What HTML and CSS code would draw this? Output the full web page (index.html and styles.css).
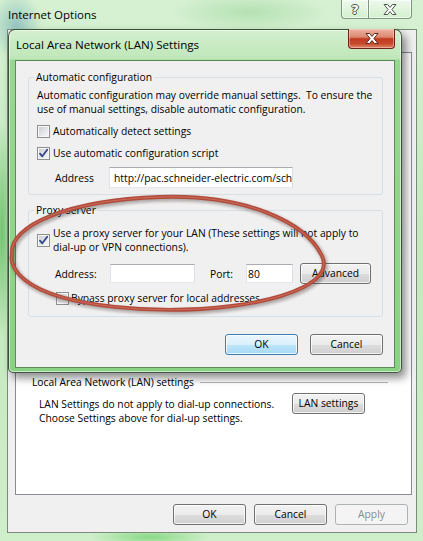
FILE: index.html
```html
<!DOCTYPE html>
<html lang="en">
<head>
<meta charset="utf-8">
<title>Internet Options</title>
<link rel="stylesheet" href="styles.css">
</head>
<body>
<div class="win">
  <div class="win-title">
    <span class="win-title-text">Internet Options</span>
    <div class="caption">
      <span class="cap-btn cap-help">?</span>
      <span class="cap-btn cap-close">
        <svg width="14" height="11" viewBox="0 0 14 11"><path d="M1 0.5H4.6L7 3.4L9.4 0.5H13L8.9 5.5L13 10.5H9.4L7 7.6L4.6 10.5H1L5.1 5.5Z" fill="#fff" stroke="#4a564a" stroke-width="1" stroke-linejoin="round"/></svg>
      </span>
    </div>
  </div>
  <div class="win-client">
    <div class="tabpanel">
      <div class="lan-head">
        <span class="lan-title">Local Area Network (LAN) settings</span>
        <span class="rule"></span>
      </div>
      <div class="lan-body">
        <p class="lan-text">LAN Settings do not apply to dial-up connections.<br>Choose Settings above for dial-up settings.</p>
        <button class="btn btn-lan">LAN settings</button>
      </div>
    </div>
    <div class="win-buttons">
      <button class="btn">OK</button>
      <button class="btn">Cancel</button>
      <button class="btn btn-disabled">Apply</button>
    </div>
  </div>
</div>

<div class="dialog">
  <div class="dlg-title">
    <span class="dlg-title-text">Local Area Network (LAN) Settings</span>
    <span class="dlg-close">
      <svg width="14" height="11" viewBox="0 0 14 11"><path d="M1 0.5H4.6L7 3.4L9.4 0.5H13L8.9 5.5L13 10.5H9.4L7 7.6L4.6 10.5H1L5.1 5.5Z" fill="#fff" stroke="#5a2a22" stroke-width="1" stroke-linejoin="round"/></svg>
    </span>
  </div>
  <div class="dlg-client">
    <fieldset class="group g-auto">
      <legend>Automatic configuration</legend>
      <p class="desc">Automatic configuration may override manual settings.&nbsp; To ensure the<br>use of manual settings, disable automatic configuration.</p>
      <label class="check"><span class="cb"></span><span>Automatically detect settings</span></label>
      <label class="check"><span class="cb"><svg width="11" height="11" viewBox="0 0 11 11"><path d="M2 5.6L4.3 8.3L9.2 1.8" fill="none" stroke="#34468a" stroke-width="1.8" stroke-linecap="round" stroke-linejoin="round"/></svg></span><span>Use automatic configuration script</span></label>
      <div class="addr-row">
        <span class="addr-label">Address</span>
        <input class="field field-auto" type="text" value="http://pac.schneider-electric.com/sch" readonly>
      </div>
    </fieldset>

    <fieldset class="group g-proxy">
      <legend>Proxy server</legend>
      <label class="check proxy-check"><span class="cb"><svg width="11" height="11" viewBox="0 0 11 11"><path d="M2 5.6L4.3 8.3L9.2 1.8" fill="none" stroke="#34468a" stroke-width="1.8" stroke-linecap="round" stroke-linejoin="round"/></svg></span><span>Use a proxy server for your LAN (These settings will not apply to<br>dial-up or VPN connections).</span></label>
      <div class="proxy-row">
        <span class="lbl-addr">Address:</span>
        <input class="field field-proxy" type="text" value="" readonly>
        <span class="lbl-port">Port:</span>
        <input class="field field-port" type="text" value="80" readonly>
        <button class="btn btn-adv">Advanced</button>
      </div>
      <label class="check bypass"><span class="cb"></span><span>Bypass proxy server for local addresses</span></label>
    </fieldset>

    <div class="dlg-buttons">
      <button class="btn btn-default">OK</button>
      <button class="btn">Cancel</button>
    </div>
  </div>
</div>

<svg class="ellipse" width="423" height="541" viewBox="0 0 423 541">
  <defs><filter id="soft" x="-10%" y="-10%" width="120%" height="120%"><feGaussianBlur stdDeviation="1.4"/></filter></defs>
  <path d="M12 255 C8 225 70 200 160 197 C245 194 306 222 322 256 C333 280 292 298 232 306 C160 315 60 308 25 280 C15 272 10 262 12 255 Z" fill="none" stroke="rgba(40,30,25,0.35)" stroke-width="5" transform="translate(1.5 2)" filter="url(#soft)"/>
  <path d="M12 255 C8 225 70 200 160 197 C245 194 306 222 322 256 C333 280 292 298 232 306 C160 315 60 308 25 280 C15 272 10 262 12 255 Z" fill="none" stroke="#b24a3a" stroke-width="3.8"/>
  <path d="M12 255 C8 225 70 200 160 197 C245 194 306 222 322 256 C333 280 292 298 232 306 C160 315 60 308 25 280 C15 272 10 262 12 255 Z" fill="none" stroke="rgba(235,150,130,0.45)" stroke-width="1"/>
</svg>
</body>
</html>
```

FILE: styles.css
```css
* { box-sizing: border-box; }
html, body { margin: 0; padding: 0; }

body {
  position: relative;
  width: 423px;
  height: 541px;
  overflow: hidden;
  font-family: "Open Sans", "Noto Sans", sans-serif;
  font-size: 10.3px;
  line-height: 14px;
  color: #000;
  background:
    radial-gradient(26px 34px at 16px 26px, rgba(96,160,178,.55), rgba(96,160,178,0)),
    radial-gradient(9px 110px at 2px 230px, rgba(60,170,60,.6), rgba(60,170,60,0)),
    radial-gradient(60px 10px at 150px 537px, rgba(80,200,80,.55), rgba(80,200,80,0)),
    radial-gradient(80px 20px at 250px 12px, rgba(150,210,150,.5), rgba(150,210,150,0)),
    linear-gradient(180deg, #d6f1d2 0%, #c3e9bd 45%, #cfeeca 100%);
}

/* ---------- outer window ---------- */
.win {
  height: 541px;
  padding: 0 6px 8px 7px;
  display: flex;
  flex-direction: column;
}
.win-title {
  height: 29px;
  flex: none;
  display: flex;
  justify-content: space-between;
  align-items: flex-start;
}
.win-title-text {
  margin: 8px 0 0 1px;
  font-size: 11.5px;
  line-height: 14px;
}
.caption { display: flex; margin-right: 5px; }
.cap-btn {
  height: 19px;
  display: flex;
  align-items: center;
  justify-content: center;
  border: 1px solid rgba(70,100,70,.65);
  border-top: 0;
  background: linear-gradient(180deg, rgba(255,255,255,.6), rgba(205,238,200,.45));
  box-shadow: inset 0 0 0 1px rgba(255,255,255,.6);
}
.cap-help {
  width: 27px;
  border-right: 0;
  border-radius: 0 0 0 4px;
  color: #fff;
  font: bold 13px/1 "DejaVu Sans", sans-serif;
  text-shadow: 1px 0 0 #4a564a, -1px 0 0 #4a564a, 0 1px 0 #4a564a, 0 -1px 0 #4a564a;
}
.cap-close { width: 44px; border-radius: 0 0 4px 0; }

.win-client {
  flex: 1;
  display: flex;
  flex-direction: column;
  background: #f0f0f0;
  border: 1px solid #7c8a7c;
  padding: 22px 4px 7px 7px;
}
.tabpanel {
  height: 443px;
  flex: none;
  background: #fff;
  border: 1px solid #898c95;
  padding-top: 322px;
}
.lan-head {
  display: flex;
  align-items: center;
  padding-left: 16px;
  margin-right: 23px;
  height: 14px;
}
.lan-title { white-space: nowrap; }
.rule { flex: 1; height: 1px; background: #b9b9b9; margin-left: 6px; }
.lan-body {
  display: flex;
  align-items: flex-start;
  padding-left: 23px;
  margin-top: 4px;
}
.lan-text { margin: 4px 0 0; width: 253px; white-space: nowrap; }
.btn-lan { width: 95px; }

.win-buttons {
  display: flex;
  justify-content: flex-end;
  gap: 8px;
  margin: 9px 4px 0 0;
}

/* ---------- buttons ---------- */
.btn {
  flex: none;
  width: 73px;
  height: 21px;
  padding: 0;
  font: inherit;
  line-height: 19px;
  color: #000;
  border: 1px solid #707070;
  border-radius: 3px;
  background: linear-gradient(180deg, #f2f2f2 0%, #ebebeb 50%, #dddddd 51%, #cfcfcf 100%);
  box-shadow: inset 0 0 0 1px rgba(255,255,255,.75);
}
.btn-disabled {
  border-color: #adb2b5;
  background: #f4f4f4;
  color: #8a8a8a;
  box-shadow: none;
}
.btn-default {
  border-color: #3c7fb1;
  background: linear-gradient(180deg, #eaf6fd 0%, #d9f0fc 50%, #bee6fd 51%, #a7d9f5 100%);
}

/* ---------- LAN dialog ---------- */
.dialog {
  position: absolute;
  left: 8px;
  top: 29px;
  width: 394px;
  height: 344px;
  display: flex;
  flex-direction: column;
  padding: 0 6px 4px;
  border: 1px solid rgba(40,60,40,.85);
  border-radius: 7px 7px 5px 5px;
  background: linear-gradient(180deg, #d4efcf 0, #bfe7b9 29px, #98d791 30px, #8ad283 100%);
  box-shadow: 4px 5px 9px rgba(0,0,0,.45), inset 0 0 0 1px rgba(255,255,255,.55);
}
.dlg-title {
  height: 30px;
  flex: none;
  display: flex;
  justify-content: space-between;
  align-items: flex-start;
}
.dlg-title-text {
  margin: 7px 0 0 1px;
  font-size: 11.6px;
  line-height: 15px;
}
.dlg-close {
  width: 47px;
  height: 20px;
  margin-top: -1px;
  display: flex;
  align-items: center;
  justify-content: center;
  border: 1px solid #6b2418;
  border-top: 0;
  border-radius: 0 0 4px 4px;
  background: linear-gradient(180deg, #eab2a0 0%, #dc8a70 42%, #c13a20 52%, #c84a2d 78%, #e08a6c 100%);
  box-shadow: inset 0 0 0 1px rgba(255,220,210,.45);
}
.dlg-client {
  flex: 1;
  display: flex;
  flex-direction: column;
  background: #f0f0f0;
  border: 1px solid #5e8a5a;
  padding: 9px 11px 12px 12px;
}

.group {
  margin: 0;
  min-width: 0;
  border: 1px solid #d5dfe5;
  border-radius: 3px;
  padding: 4px 8px 6px;
}
.group legend {
  padding: 0 2px;
  margin-left: -3px;
  line-height: 14px;
}
.g-proxy { margin-top: 8px; padding: 9px 8px 11px; }

.desc { margin: 0; white-space: nowrap; }

.check {
  display: flex;
  align-items: center;
  gap: 3px;
  height: 14px;
  white-space: nowrap;
}
.g-auto .check { margin-top: 8px; }

.cb {
  flex: none;
  width: 13px;
  height: 13px;
  display: flex;
  align-items: center;
  justify-content: center;
  border: 1px solid #8e8f8f;
  background: linear-gradient(135deg, #c8cbd0 0%, #e4e6e8 55%, #f9f9f9 100%);
  box-shadow: inset 0 0 0 1px #f6f6f6;
}

.addr-row {
  display: flex;
  align-items: center;
  margin-top: 7px;
  padding-left: 18px;
}
.addr-label { width: 54px; }

.field {
  margin: 0;
  height: 21px;
  border: 1px solid;
  border-color: #abadb3 #dbdfe6 #e3e9ef #e2e3ea;
  background: #fff;
  font: inherit;
  color: #000;
  padding: 0 0 0 4px;
  outline: none;
}
.field-auto { width: 184px; }

.proxy-check { height: 28px; }
.proxy-row {
  display: flex;
  align-items: center;
  height: 21px;
  margin-top: 9px;
  padding-left: 18px;
}
.lbl-addr { width: 55px; }
.field-proxy { width: 85px; height: 19px; }
.lbl-port { margin-left: 15px; width: 36px; }
.field-port { width: 47px; height: 19px; padding-left: 1px; }
.btn-adv { margin-left: 7px; width: 71px; }

.bypass { margin-top: 7px; padding-left: 19px; gap: 2px; }

.dlg-buttons {
  display: flex;
  justify-content: flex-end;
  gap: 12px;
  margin-top: 17px;
}

/* ---------- annotation ---------- */
.ellipse {
  position: absolute;
  left: 0;
  top: 0;
  pointer-events: none;
}
```
